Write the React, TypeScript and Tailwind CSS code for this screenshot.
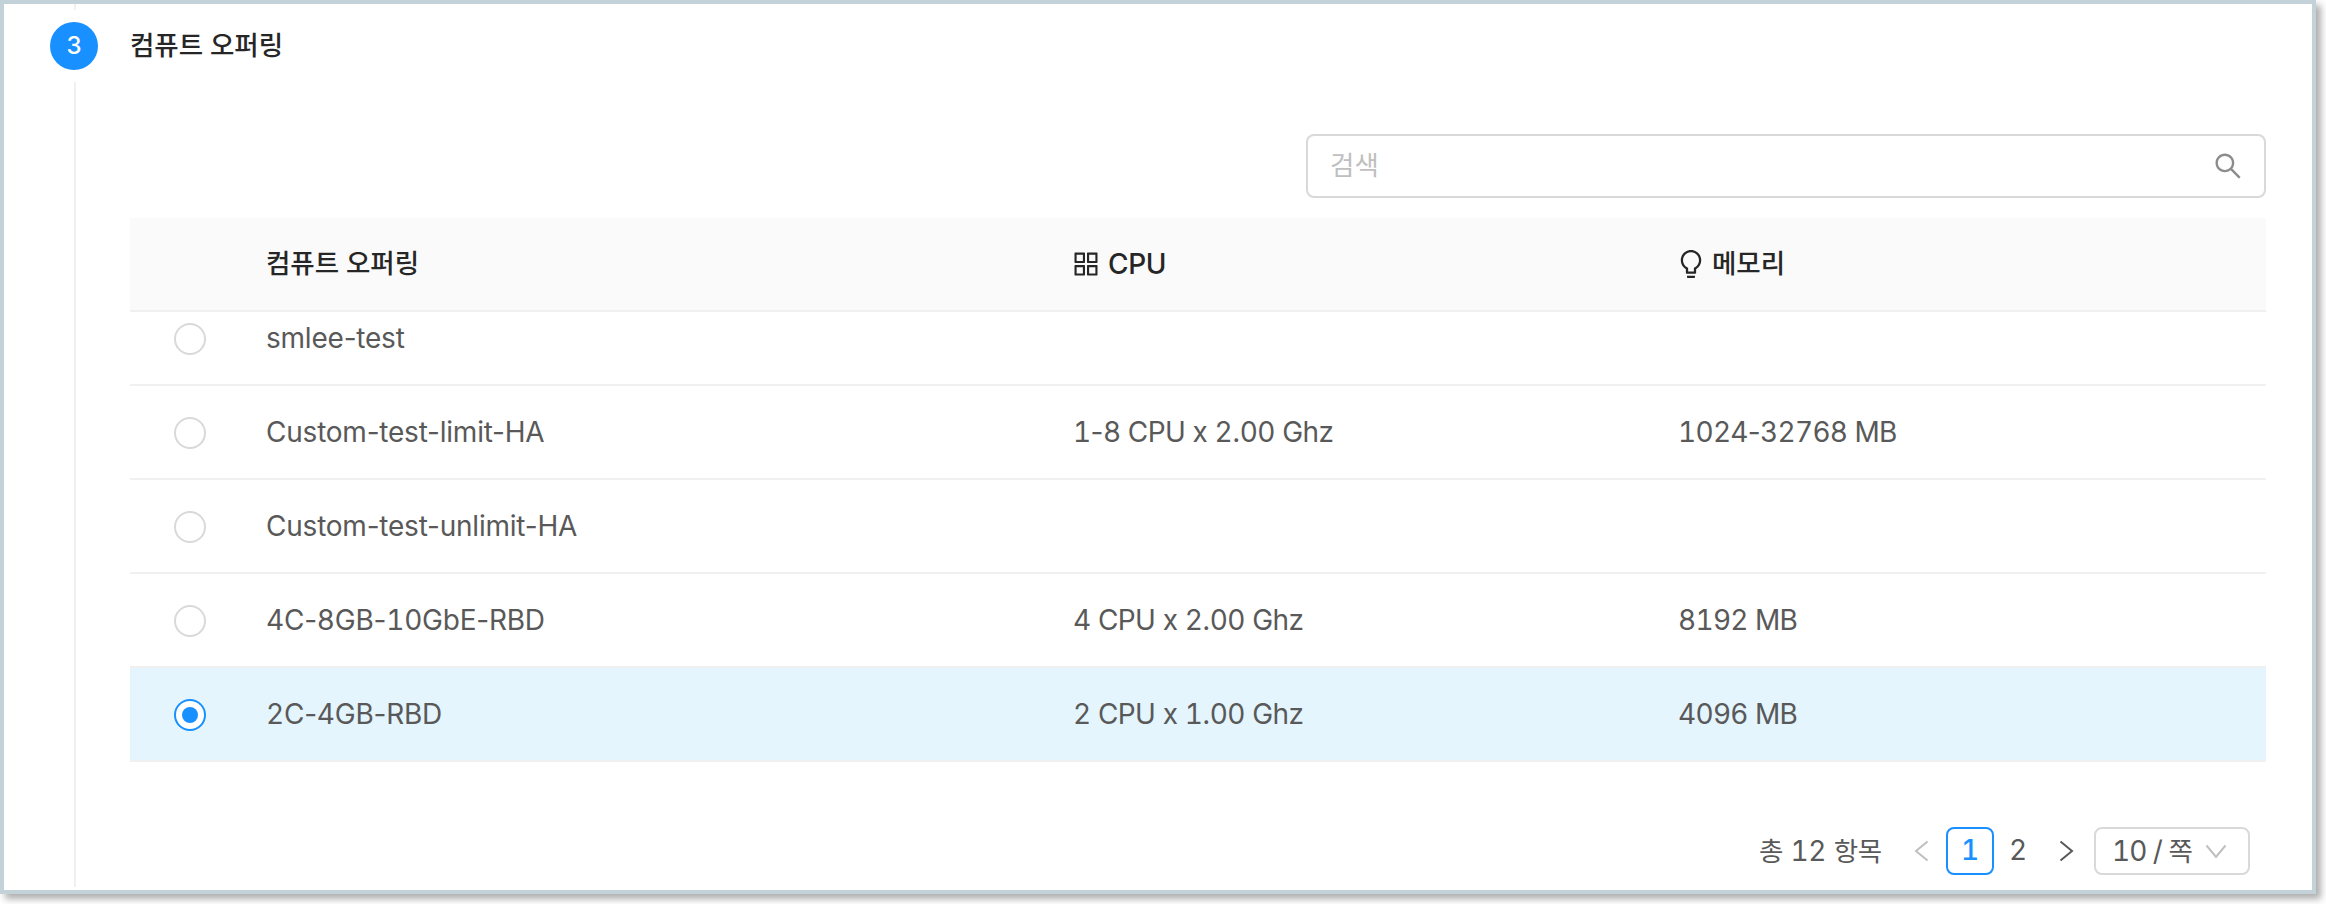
import { useState } from "react";
import { AiOutlineAppstore, AiOutlineBulb, AiOutlineSearch } from "react-icons/ai";

type Offering = { name: string; cpu: string; memory: string };

const offerings: Offering[] = [
  { name: "smlee-test", cpu: "", memory: "" },
  { name: "Custom-test-limit-HA", cpu: "1-8 CPU x 2.00 Ghz", memory: "1024-32768 MB" },
  { name: "Custom-test-unlimit-HA", cpu: "", memory: "" },
  { name: "4C-8GB-10GbE-RBD", cpu: "4 CPU x 2.00 Ghz", memory: "8192 MB" },
  { name: "2C-4GB-RBD", cpu: "2 CPU x 1.00 Ghz", memory: "4096 MB" },
];

const columns = "grid grid-cols-[136px_807px_605px_1fr] items-center border-b-2 border-[#f0f0f0]";

// Digits get equal widths while hyphens and letters keep their natural ones.
function Figures({ text }: { text: string }) {
  return (
    <>
      {text.split(/(\d+)/).map((part, i) =>
        i % 2 ? (
          <span key={i} className="tabular-nums">
            {part}
          </span>
        ) : (
          part
        ),
      )}
    </>
  );
}

function Chevron({ points, className }: { points: string; className: string }) {
  return (
    <svg viewBox="0 0 24 24" className={className} fill="none" stroke="currentColor" strokeWidth="2">
      <polyline points={points} />
    </svg>
  );
}

function Radio({ checked, onSelect }: { checked: boolean; onSelect: () => void }) {
  return (
    <button
      type="button"
      role="radio"
      aria-checked={checked}
      onClick={onSelect}
      className={`mt-0.5 ml-11 flex size-8 items-center justify-center rounded-full border-2 bg-white ${
        checked ? "border-[#1890ff]" : "border-[#d9d9d9]"
      }`}
    >
      {checked && <span className="size-4 rounded-full bg-[#1890ff]" />}
    </button>
  );
}

function OfferingTable() {
  const [selected, setSelected] = useState("2C-4GB-RBD");
  return (
    <div className="mt-5">
      <div className={`${columns} h-[94px] bg-[#fafafa] font-medium text-[#262626]`}>
        <span />
        <span className="pb-0.5 text-[26.5px] tracking-[-0.05px]">컴퓨트 오퍼링</span>
        <span className="flex items-center">
          <AiOutlineAppstore className="-ml-[3px] size-8" />
          <span className="ml-1.5 tracking-[-0.4px]">CPU</span>
        </span>
        <span className="flex items-center">
          <AiOutlineBulb className="-ml-[3px] size-8" />
          <span className="ml-[5px] pb-0.5 text-[26.5px] tracking-[-0.05px]">메모리</span>
        </span>
      </div>
      <div className="h-[450px] overflow-hidden">
        <div className="-mt-5" role="radiogroup">
          {offerings.map((o) => (
            <div key={o.name} className={`${columns} h-[94px] ${selected === o.name ? "bg-[#e4f5fe]" : "bg-white"}`}>
              <Radio checked={selected === o.name} onSelect={() => setSelected(o.name)} />
              <span className="tracking-[-0.22px]">
                <Figures text={o.name} />
              </span>
              <span className="tracking-[-0.57px]">
                <Figures text={o.cpu} />
              </span>
              <span className="tracking-[-0.7px]">
                <Figures text={o.memory} />
              </span>
            </div>
          ))}
        </div>
      </div>
    </div>
  );
}

function Pagination() {
  return (
    <div className="mt-[65px] mr-4 flex h-12 items-center justify-end tabular-nums">
      <span className="mr-4 tracking-[-0.2px] whitespace-pre">
        <span className="text-[26.5px]">총</span> 12 <span className="text-[26.5px]">항목</span>
      </span>
      <button type="button" className="flex w-12 justify-center text-[#bfbfbf]">
        <Chevron points="17.5,2.5 6,12 17.5,21.5" className="size-6" />
      </button>
      <button
        type="button"
        className="flex size-12 items-center justify-center rounded-lg border-2 border-[#1890ff] pb-0.5 font-medium text-[#1890ff]"
      >
        1
      </button>
      <button type="button" className="flex size-12 items-center justify-center pb-0.5">
        2
      </button>
      <button type="button" className="mr-1 flex w-12 justify-center">
        <Chevron points="6.5,2.5 18,12 6.5,21.5" className="size-6" />
      </button>
      <button
        type="button"
        className="flex h-12 w-[156px] items-center rounded-lg border-2 border-[#d9d9d9] pl-4 whitespace-pre"
      >
        <span className="tracking-[-1px]">10 / </span>
        <span className="text-[26.5px]">쪽</span>
        <Chevron points="2.5,6.5 12,18 21.5,6.5" className="mr-5 ml-auto size-6 text-[#bfbfbf]" />
      </button>
    </div>
  );
}

export default function App() {
  return (
    <div className="h-[904px] w-[2326px] overflow-hidden bg-white font-['Inter','Noto_Sans_CJK_KR',sans-serif] text-[28px] leading-none text-[#595959]">
      <div className="flex h-[894px] w-[2316px] border-4 border-[#c3d1d9] bg-white shadow-[5px_5px_7px_rgba(0,0,0,0.32)]">
        <div className="ml-[46px] flex w-12 flex-col items-center">
          <div className="ml-0.5 h-1.5 w-0.5 bg-[#f0f0f0]" />
          <div className="mt-3 flex size-12 shrink-0 items-center justify-center rounded-full bg-[#1890ff] text-2xl leading-none font-medium text-white">
            3
          </div>
          <div className="mt-3 mb-[3px] ml-0.5 w-0.5 flex-1 bg-[#f0f0f0]" />
        </div>
        <div className="ml-8 w-[2136px]">
          <h2 className="mt-[18px] flex h-12 items-center pb-0.5 text-[26.5px] font-medium tracking-[-0.05px] text-[#262626]">
            컴퓨트 오퍼링
          </h2>
          <div className="mt-16 ml-auto flex h-16 w-[960px] items-center justify-between rounded-lg border-2 border-[#d9d9d9] pr-5 pl-[22px]">
            <input
              placeholder="검색"
              className="w-[800px] text-[26.5px] leading-normal outline-none placeholder:text-[#bfbfbf]"
            />
            <AiOutlineSearch className="size-8 text-[#8c8c8c]" />
          </div>
          <OfferingTable />
          <Pagination />
        </div>
      </div>
    </div>
  );
}
